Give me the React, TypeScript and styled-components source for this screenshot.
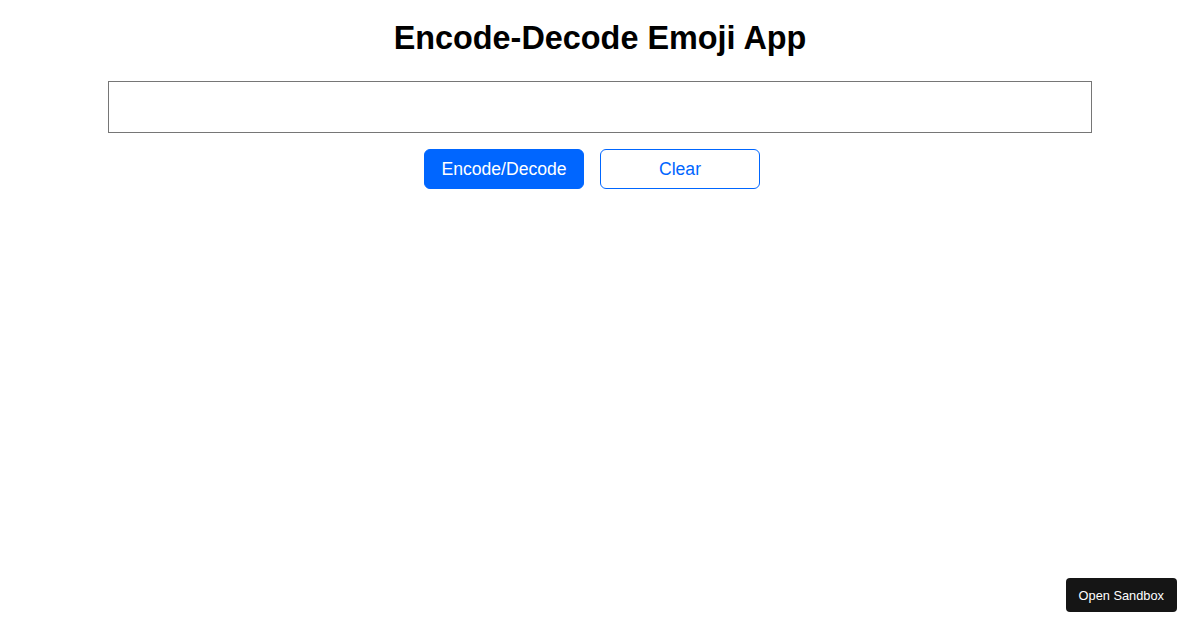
import React, { FC, useState } from "react";
import styled, { createGlobalStyle } from "styled-components";

const GlobalStyle = createGlobalStyle`
  body {
    margin: 0;
    background: #ffffff;
    font-family: "Liberation Sans", Arial, sans-serif;
    color: #000000;
  }
`;

const StyledWrapper = styled.main`
  display: flex;
  flex-direction: column;
  align-items: center;
  padding: 20px 108px 0;
`;

const StyledTitle = styled.h1`
  font-size: 32.4px;
  font-weight: 700;
  margin: 0 0 24px;
  line-height: normal;
`;

const StyledInput = styled.input`
  box-sizing: border-box;
  width: 100%;
  height: 52px;
  border: 1px solid #767676;
  border-radius: 0;
  padding: 0 12px;
  font-size: 18px;
  font-family: inherit;
  outline: none;
`;

const StyledActions = styled.div`
  display: flex;
  margin-top: 16px;
`;

const StyledButton = styled.button<{ $variant: "primary" | "outline" }>`
  box-sizing: border-box;
  width: 160px;
  height: 40px;
  margin-right: 16px;
  border-radius: 6px;
  border: 1px solid #0066ff;
  background: ${({ $variant }) => ($variant === "primary" ? "#0066ff" : "#ffffff")};
  color: ${({ $variant }) => ($variant === "primary" ? "#ffffff" : "#0066ff")};
  font-family: "Liberation Sans", Arial, sans-serif;
  font-size: 17.6px;
  cursor: pointer;
`;

const StyledResult = styled.p`
  font-size: 18px;
  margin: 16px 0 0;
`;

const StyledSandboxLink = styled.a`
  position: fixed;
  right: 23px;
  bottom: 18px;
  display: flex;
  align-items: center;
  height: 34px;
  padding: 0 13px;
  background: #151515;
  color: #ffffff;
  border-radius: 4px;
  font-family: "Liberation Sans", Arial, sans-serif;
  font-size: 12.8px;
  text-decoration: none;
`;

const App: FC = () => {
  const [text, setText] = useState("");
  const [result, setResult] = useState("");

  return (
    <>
      <GlobalStyle />
      <StyledWrapper>
        <StyledTitle>Encode-Decode Emoji App</StyledTitle>
        <StyledInput value={text} onChange={(e) => setText(e.target.value)} />
        <StyledActions>
          <StyledButton $variant="primary" onClick={() => setResult(text)}>
            Encode/Decode
          </StyledButton>
          <StyledButton
            $variant="outline"
            onClick={() => {
              setText("");
              setResult("");
            }}
          >
            Clear
          </StyledButton>
        </StyledActions>
        {result && <StyledResult>{result}</StyledResult>}
      </StyledWrapper>
      <StyledSandboxLink href="#">Open Sandbox</StyledSandboxLink>
    </>
  );
};

export default App;
